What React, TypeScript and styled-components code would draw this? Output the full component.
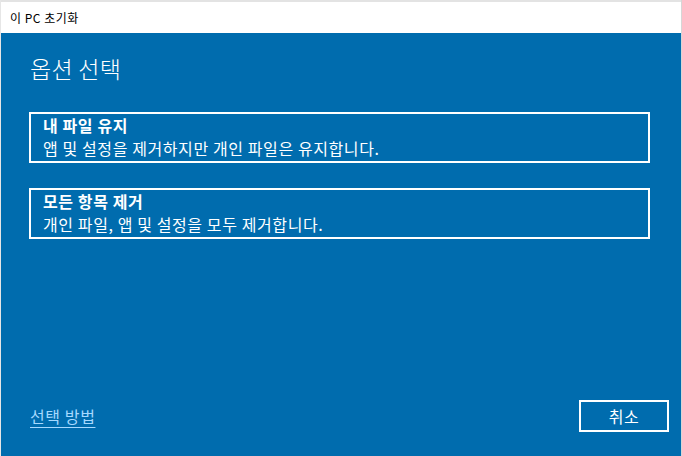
import React from 'react'
import styled, { createGlobalStyle } from 'styled-components'

const GlobalStyle = createGlobalStyle`
  html, body {
    margin: 0;
    padding: 0;
    background: #ffffff;
  }
  body {
    font-family: "Noto Sans CJK KR", "Noto Sans", sans-serif;
  }
`

const Window = styled.div`
  width: 682px;
  height: 456px;
  display: flex;
  flex-direction: column;
  box-sizing: border-box;
  border-right: 1px solid #d6d6d6;
  border-left: 1px solid #e6e6e6;
`

const TitleBar = styled.div`
  height: 33px;
  box-sizing: border-box;
  border-top: 2px solid #e3e3e3;
  display: flex;
  align-items: center;
  padding-left: 9px;
  font-size: 12px;
  letter-spacing: 0.5px;
  color: #000;
  background: #fff;
`

const Body = styled.div`
  flex: 1;
  background: #006cae;
  display: flex;
  flex-direction: column;
  padding: 0 12px 24px 28px;
  color: #fff;
  letter-spacing: 0.6px;
`

const Heading = styled.h1`
  margin: 19px 0 28px 1px;
  font-size: 23px;
  line-height: 32px;
  font-weight: 300;
  letter-spacing: 0.3px;
  color: #fff;
`

const OptionList = styled.div`
  display: flex;
  flex-direction: column;
  gap: 25px;
  width: 621px;
`

const OptionCard = styled.button`
  display: flex;
  flex-direction: column;
  align-items: flex-start;
  background: transparent;
  border: 2px solid #ffffff;
  padding: 0 12px 1px;
  color: #fff;
  font-family: inherit;
  letter-spacing: inherit;
  text-align: left;
  cursor: pointer;
`

const OptionTitle = styled.div`
  font-size: 16px;
  line-height: 23px;
  font-weight: 700;
`

const OptionDesc = styled.div`
  font-size: 16px;
  line-height: 23px;
  font-weight: 400;
`

const Footer = styled.div`
  margin-top: auto;
  display: flex;
  justify-content: space-between;
  align-items: center;
`

const HelpLink = styled.a`
  font-size: 16px;
  line-height: 21px;
  color: #a6d9ff;
  text-decoration: underline;
  text-underline-offset: 4px;
  margin-left: 1px;
  cursor: pointer;
`

const CancelButton = styled.button`
  width: 90px;
  height: 32px;
  border: 2px solid #fff;
  background: transparent;
  color: #fff;
  font-family: inherit;
  font-size: 16px;
  letter-spacing: inherit;
  cursor: pointer;
`

const options = [
  { title: '내 파일 유지', desc: '앱 및 설정을 제거하지만 개인 파일은 유지합니다.' },
  { title: '모든 항목 제거', desc: '개인 파일, 앱 및 설정을 모두 제거합니다.' },
]

export default function App() {
  return (
    <>
      <GlobalStyle />
      <Window>
        <TitleBar>이 PC 초기화</TitleBar>
        <Body>
          <Heading>옵션 선택</Heading>
          <OptionList>
            {options.map((o) => (
              <OptionCard key={o.title}>
                <OptionTitle>{o.title}</OptionTitle>
                <OptionDesc>{o.desc}</OptionDesc>
              </OptionCard>
            ))}
          </OptionList>
          <Footer>
            <HelpLink>선택 방법</HelpLink>
            <CancelButton>취소</CancelButton>
          </Footer>
        </Body>
      </Window>
    </>
  )
}
